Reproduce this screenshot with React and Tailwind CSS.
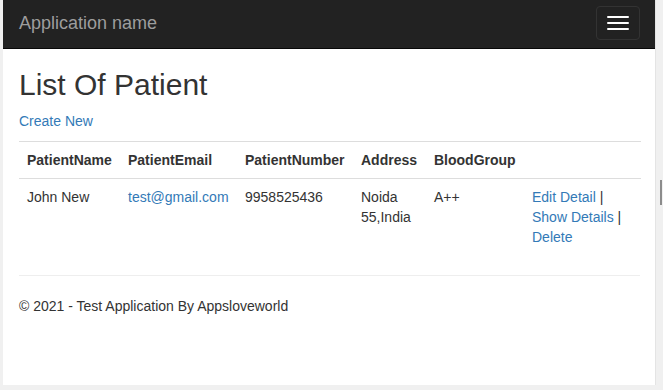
const patients = [
  {
    name: 'John New',
    email: 'test@gmail.com',
    number: '9958525436',
    address: ['Noida', '55,India'],
    blood: 'A++',
  },
]

const App = () => {
  return (
    <div className="flex h-[390px] w-[663px] bg-[#f0f0f0] font-['Liberation_Sans',Arial,sans-serif] text-[14px] leading-[20px] text-[#333]">
      <div className="ml-[3px] flex h-[385px] w-[653px] flex-col border-r border-[#e4e4e4] bg-white">
        <nav className="flex h-[49px] items-start justify-between border-b border-[#080808] bg-[#222] pl-[16px] pr-[15px]">
          <span className="pt-[13px] text-[18px] leading-[20px] text-[#9d9d9d]">Application name</span>
          <button className="mt-[6px] flex h-[34px] w-[44px] flex-col items-center justify-center gap-[4px] rounded-[4px] border border-[#333]">
            <span className="block h-[2px] w-[22px] rounded-[1px] bg-white" />
            <span className="block h-[2px] w-[22px] rounded-[1px] bg-white" />
            <span className="block h-[2px] w-[22px] rounded-[1px] bg-white" />
          </button>
        </nav>

        <main className="pl-[16px] pr-[15px] pt-[19px]">
          <h2 className="text-[30px] font-normal leading-[33px] text-[#333]">List Of Patient</h2>
          <p className="mt-[10px]">
            <a href="#" className="text-[#337ab7]">Create New</a>
          </p>

          <table className="mt-[10px] w-[622px] table-fixed border-collapse">
            <tbody>
              <tr>
                <th className="w-[101px] whitespace-nowrap border-t border-[#ddd] p-[8px] text-left font-bold">PatientName</th>
                <th className="w-[117px] whitespace-nowrap border-t border-[#ddd] p-[8px] text-left font-bold">PatientEmail</th>
                <th className="w-[116px] whitespace-nowrap border-t border-[#ddd] p-[8px] text-left font-bold">PatientNumber</th>
                <th className="w-[73px] whitespace-nowrap border-t border-[#ddd] p-[8px] text-left font-bold">Address</th>
                <th className="w-[98px] whitespace-nowrap border-t border-[#ddd] p-[8px] text-left font-bold">BloodGroup</th>
                <th className="w-[117px] border-t border-[#ddd] p-[8px]" />
              </tr>
              {patients.map((p) => (
                <tr key={p.email}>
                  <td className="border-t border-[#ddd] p-[8px] align-top">{p.name}</td>
                  <td className="border-t border-[#ddd] p-[8px] align-top">
                    <a href="#" className="text-[#337ab7]">{p.email}</a>
                  </td>
                  <td className="border-t border-[#ddd] p-[8px] align-top">{p.number}</td>
                  <td className="border-t border-[#ddd] p-[8px] align-top">
                    {p.address[0]}
                    <br />
                    {p.address[1]}
                  </td>
                  <td className="border-t border-[#ddd] p-[8px] align-top">{p.blood}</td>
                  <td className="whitespace-nowrap border-t border-[#ddd] p-[8px] align-top">
                    <a href="#" className="text-[#337ab7]">Edit Detail</a> |
                    <br />
                    <a href="#" className="text-[#337ab7]">Show Details</a> |
                    <br />
                    <a href="#" className="text-[#337ab7]">Delete</a>
                  </td>
                </tr>
              ))}
            </tbody>
          </table>

          <hr className="mt-[20px] border-t border-[#eee]" />
          <footer className="pt-[20px]">
            <p>© 2021 - Test Application By Appsloveworld</p>
          </footer>
        </main>
      </div>
      <div className="w-[7px]">
        <div className="ml-[4px] mt-[180px] h-[25px] w-[2px] bg-[#8c8c8c]" />
      </div>
    </div>
  )
}

export default App
